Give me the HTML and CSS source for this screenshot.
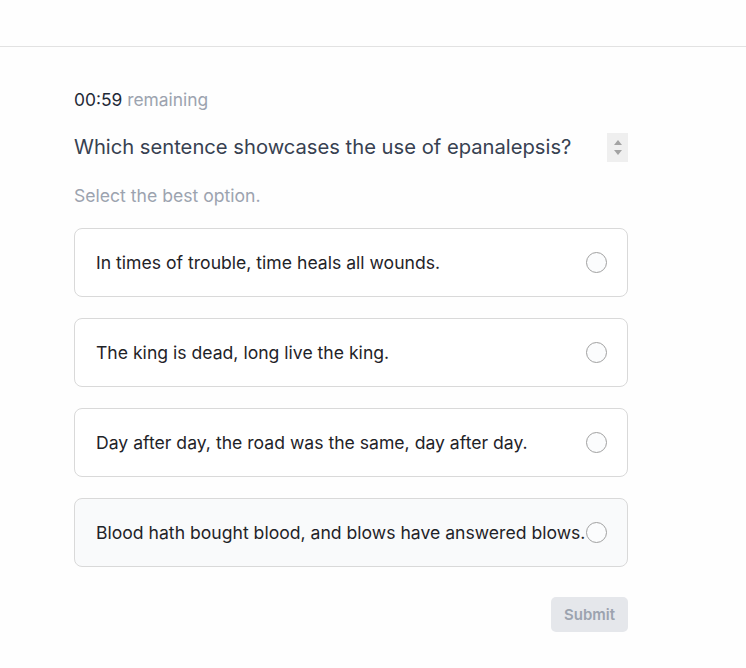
FILE: index.html
```html
<!DOCTYPE html>
<html lang="en">
<head>
    <meta charset="UTF-8">
    <meta name="viewport" content="width=device-width, initial-scale=1.0">
    <title>Quiz</title>
    <link rel="stylesheet" href="styles.css">
</head>
<body>
    <header class="top-bar"></header>

    <main class="quiz">
        <div class="timer"><span class="time">00:59</span> remaining</div>

        <div class="question-row">
            <h2 class="question">Which sentence showcases the use of epanalepsis?</h2>
            <div class="spinner">
                <span class="arrow up"></span>
                <span class="arrow down"></span>
            </div>
        </div>

        <p class="hint">Select the best option.</p>

        <div class="options">
            <label class="option">
                <span class="option-text">In times of trouble, time heals all wounds.</span>
                <span class="radio"></span>
            </label>
            <label class="option">
                <span class="option-text">The king is dead, long live the king.</span>
                <span class="radio"></span>
            </label>
            <label class="option">
                <span class="option-text">Day after day, the road was the same, day after day.</span>
                <span class="radio"></span>
            </label>
            <label class="option hovered">
                <span class="option-text">Blood hath bought blood, and blows have answered blows.</span>
                <span class="radio"></span>
            </label>
        </div>

        <div class="actions">
            <button class="submit" disabled>Submit</button>
        </div>
    </main>
</body>
</html>
```

FILE: styles.css
```css
body {
    margin: 0;
    font-family: Inter, "Noto Sans", sans-serif;
    background-color: #fefefe;
    color: #111827;
}
.top-bar {
    height: 46px;
    border-bottom: 1px solid #e2e2e2;
}
.quiz {
    width: 554px;
    padding: 41px 0 0 74px;
}
.timer {
    font-size: 17.4px;
    color: #9ca3af;
    line-height: 24px;
}
.time {
    color: #1f2937;
}
.question-row {
    display: flex;
    align-items: center;
    justify-content: space-between;
    margin-top: 20px;
}
.question {
    margin: 0;
    font-size: 20.2px;
    font-weight: 400;
    color: #374151;
    line-height: 30px;
}
.spinner {
    width: 21px;
    height: 29px;
    background-color: #efefef;
    display: flex;
    flex-direction: column;
    align-items: center;
    justify-content: center;
    gap: 5px;
}
.arrow {
    width: 0;
    height: 0;
    border-left: 4px solid transparent;
    border-right: 4px solid transparent;
}
.arrow.up {
    border-bottom: 5px solid #a3a3a3;
}
.arrow.down {
    border-top: 5px solid #a3a3a3;
}
.hint {
    margin: 21px 0 0;
    font-size: 17.6px;
    color: #9ca3af;
    line-height: 26px;
}
.options {
    display: flex;
    flex-direction: column;
    gap: 21px;
    margin-top: 19px;
}
.option {
    display: flex;
    align-items: center;
    justify-content: space-between;
    height: 67px;
    padding: 0 20px 0 21px;
    border: 1px solid #d9d9d9;
    border-radius: 8px;
    background-color: #fff;
    font-size: 17.6px;
    color: #1f2328;
    cursor: pointer;
}
.option-text {
    white-space: nowrap;
}
.option.hovered {
    background-color: #f9fafb;
}
.radio {
    flex-shrink: 0;
    width: 19px;
    height: 19px;
    border: 1px solid #a0a0a0;
    border-radius: 50%;
    background-color: #fbfcfd;
}
.actions {
    display: flex;
    justify-content: flex-end;
    margin-top: 30px;
}
.submit {
    background-color: #e5e7eb;
    color: #9ca3af;
    border: none;
    border-radius: 5px;
    padding: 0 13px;
    height: 35px;
    font-family: inherit;
    font-size: 15px;
    font-weight: 600;
}
```
